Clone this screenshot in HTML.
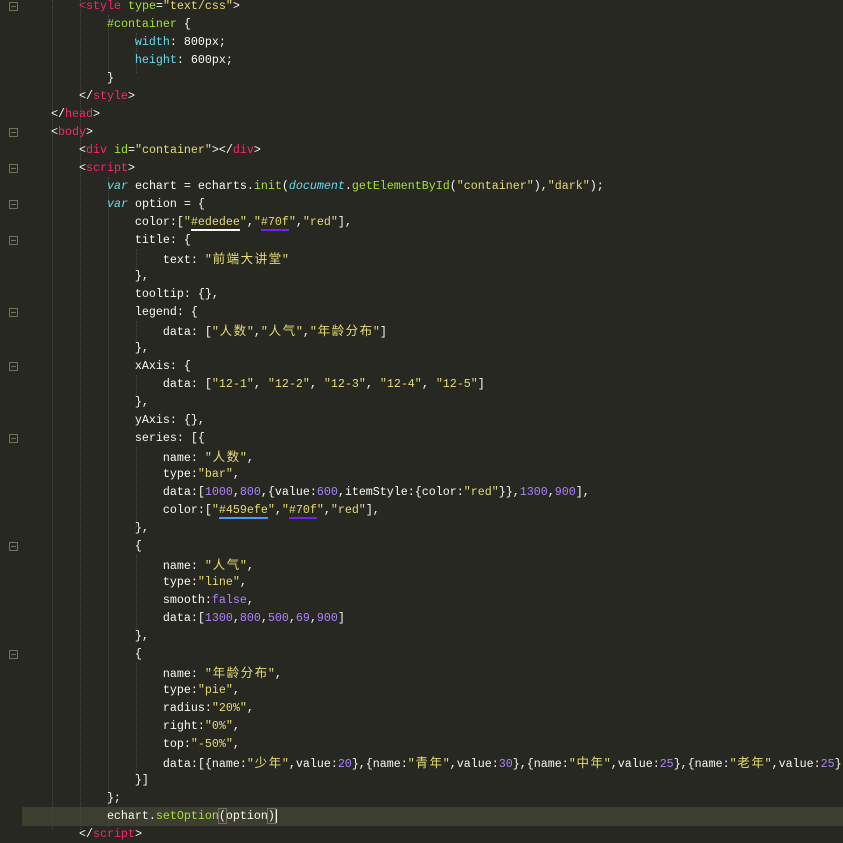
<!DOCTYPE html>
<html><head><meta charset="utf-8"><style>
html,body{margin:0;padding:0;background:#272822;width:843px;height:830px;overflow:hidden}
.l{position:absolute;left:23px;height:18px;line-height:18px;white-space:pre;font-family:"Liberation Mono",monospace;font-size:11.67px;color:#f8f8f2}
.t{color:#f92672}.a{color:#a6e22e}.s{color:#e6db74}.n{color:#ae81ff}.k{color:#66d9ef;font-style:italic}.c{color:#66d9ef}
.z{font-family:"Noto Sans CJK SC",sans-serif;font-size:12.5px;display:inline-block;width:14px;text-align:center;color:#e6db74}
.cur{position:absolute;left:22px;top:807px;width:821px;height:19px;background:#3e3d32}
.g{position:absolute;width:0;border-left:1px dotted #4a4a40}
.gn{position:absolute;left:-4px;font-family:"Liberation Mono",monospace;font-size:11.67px;color:#8f908a;line-height:18px}
.fb{position:absolute;left:9px;width:7px;height:7px;border:1px solid #75715e}
.fb:after{content:"";position:absolute;left:1px;top:3px;width:5px;height:1px;background:#75715e}
.u1{border-bottom:2px solid #f8f8f2}.u2{border-bottom:2px solid #7b19ff}.u3{border-bottom:2px solid #459efe}
</style></head><body>
<div class="cur"></div>
<div class="g" style="left:52px;top:0;height:830px"></div>
<div class="g" style="left:80px;top:0;height:830px"></div>
<div class="g" style="left:108px;top:15px;height:60px"></div>
<div class="g" style="left:108px;top:177px;height:650px"></div>
<div class="g" style="left:136px;top:33px;height:40px"></div>
<div class="g" style="left:136px;top:249px;height:20px"></div>
<div class="g" style="left:136px;top:321px;height:20px"></div>
<div class="g" style="left:136px;top:375px;height:20px"></div>
<div class="g" style="left:136px;top:447px;height:80px"></div>
<div class="g" style="left:136px;top:555px;height:80px"></div>
<div class="g" style="left:136px;top:663px;height:115px"></div>
<div class="fb" style="top:2px"></div><div class="fb" style="top:128px"></div><div class="fb" style="top:164px"></div><div class="fb" style="top:200px"></div><div class="fb" style="top:236px"></div><div class="fb" style="top:308px"></div><div class="fb" style="top:362px"></div><div class="fb" style="top:434px"></div><div class="fb" style="top:542px"></div><div class="fb" style="top:650px"></div>
<div class="l" style="top:-3px">        <span class="t">&lt;style</span> <span class="a">type</span>=<span class="s">"text/css"</span>&gt;</div>
<div class="l" style="top:15px">            <span class="a">#container</span> {</div>
<div class="l" style="top:33px">                <span class="c">width</span>: 800px;</div>
<div class="l" style="top:51px">                <span class="c">height</span>: 600px;</div>
<div class="l" style="top:69px">            }</div>
<div class="l" style="top:87px">        &lt;/<span class="t">style</span>&gt;</div>
<div class="l" style="top:105px">    &lt;/<span class="t">head</span>&gt;</div>
<div class="l" style="top:123px">    &lt;<span class="t">body</span>&gt;</div>
<div class="l" style="top:141px">        &lt;<span class="t">div</span> <span class="a">id</span>=<span class="s">"container"</span>&gt;&lt;/<span class="t">div</span>&gt;</div>
<div class="l" style="top:159px">        &lt;<span class="t">script</span>&gt;</div>
<div class="l" style="top:177px">            <span class="k">var</span> echart = echarts.<span class="a">init</span>(<span class="k">document</span>.<span class="a">getElementById</span>(<span class="s">"container"</span>),<span class="s">"dark"</span>);</div>
<div class="l" style="top:195px">            <span class="k">var</span> option = {</div>
<div class="l" style="top:213px">                color:[<span class="s">"<span class="u1">#ededee</span>"</span>,<span class="s">"<span class="u2">#70f</span>"</span>,<span class="s">"red"</span>],</div>
<div class="l" style="top:231px">                title: {</div>
<div class="l" style="top:249px">                    text: <span class="s">"<span class="z">前</span><span class="z">端</span><span class="z">大</span><span class="z">讲</span><span class="z">堂</span>"</span></div>
<div class="l" style="top:267px">                },</div>
<div class="l" style="top:285px">                tooltip: {},</div>
<div class="l" style="top:303px">                legend: {</div>
<div class="l" style="top:321px">                    data: [<span class="s">"<span class="z">人</span><span class="z">数</span>"</span>,<span class="s">"<span class="z">人</span><span class="z">气</span>"</span>,<span class="s">"<span class="z">年</span><span class="z">龄</span><span class="z">分</span><span class="z">布</span>"</span>]</div>
<div class="l" style="top:339px">                },</div>
<div class="l" style="top:357px">                xAxis: {</div>
<div class="l" style="top:375px">                    data: [<span class="s">"12-1"</span>, <span class="s">"12-2"</span>, <span class="s">"12-3"</span>, <span class="s">"12-4"</span>, <span class="s">"12-5"</span>]</div>
<div class="l" style="top:393px">                },</div>
<div class="l" style="top:411px">                yAxis: {},</div>
<div class="l" style="top:429px">                series: [{</div>
<div class="l" style="top:447px">                    name: <span class="s">"<span class="z">人</span><span class="z">数</span>"</span>,</div>
<div class="l" style="top:465px">                    type:<span class="s">"bar"</span>,</div>
<div class="l" style="top:483px">                    data:[<span class="n">1000</span>,<span class="n">800</span>,{value:<span class="n">600</span>,itemStyle:{color:<span class="s">"red"</span>}},<span class="n">1300</span>,<span class="n">900</span>],</div>
<div class="l" style="top:501px">                    color:[<span class="s">"<span class="u3">#459efe</span>"</span>,<span class="s">"<span class="u2">#70f</span>"</span>,<span class="s">"red"</span>],</div>
<div class="l" style="top:519px">                },</div>
<div class="l" style="top:537px">                {</div>
<div class="l" style="top:555px">                    name: <span class="s">"<span class="z">人</span><span class="z">气</span>"</span>,</div>
<div class="l" style="top:573px">                    type:<span class="s">"line"</span>,</div>
<div class="l" style="top:591px">                    smooth:<span class="n">false</span>,</div>
<div class="l" style="top:609px">                    data:[<span class="n">1300</span>,<span class="n">800</span>,<span class="n">500</span>,<span class="n">69</span>,<span class="n">900</span>]</div>
<div class="l" style="top:627px">                },</div>
<div class="l" style="top:645px">                {</div>
<div class="l" style="top:663px">                    name: <span class="s">"<span class="z">年</span><span class="z">龄</span><span class="z">分</span><span class="z">布</span>"</span>,</div>
<div class="l" style="top:681px">                    type:<span class="s">"pie"</span>,</div>
<div class="l" style="top:699px">                    radius:<span class="s">"20%"</span>,</div>
<div class="l" style="top:717px">                    right:<span class="s">"0%"</span>,</div>
<div class="l" style="top:735px">                    top:<span class="s">"-50%"</span>,</div>
<div class="l" style="top:753px">                    data:[{name:<span class="s">"<span class="z">少</span><span class="z">年</span>"</span>,value:<span class="n">20</span>},{name:<span class="s">"<span class="z">青</span><span class="z">年</span>"</span>,value:<span class="n">30</span>},{name:<span class="s">"<span class="z">中</span><span class="z">年</span>"</span>,value:<span class="n">25</span>},{name:<span class="s">"<span class="z">老</span><span class="z">年</span>"</span>,value:<span class="n">25</span>}]</div>
<div class="l" style="top:771px">                }]</div>
<div class="l" style="top:789px">            };</div>
<div class="l" style="top:807px">            echart.<span class="a">setOption</span><span style="outline:1px solid #75715e">(</span>option<span style="outline:1px solid #75715e">)</span><span style="border-left:2px solid #f8f8f0"></span></div>
<div class="l" style="top:825px">        &lt;/<span class="t">script</span>&gt;</div>
</body></html>
